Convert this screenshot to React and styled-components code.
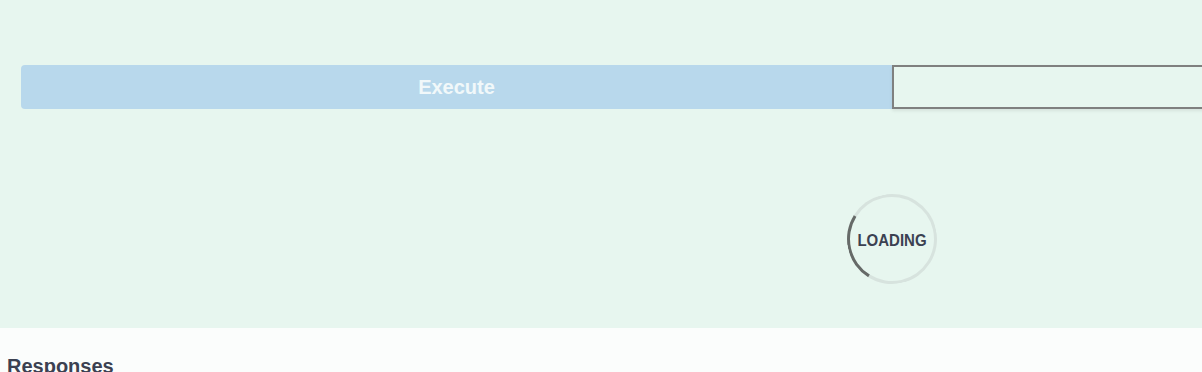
import React from "react";
import styled, { createGlobalStyle } from "styled-components";

const GlobalStyle = createGlobalStyle`
  html, body {
    margin: 0;
    padding: 0;
    overflow: hidden;
    background: #fbfdfc;
    font-family: "Liberation Sans", Arial, sans-serif;
  }
`;

export default function App() {
  return (
    <>
      <GlobalStyle />
      <Page>
        <OperationBody>
          <Inner>
            <ButtonGroup>
              <ExecuteButton>Execute</ExecuteButton>
              <ClearButton />
            </ButtonGroup>
            <LoadingContainer>
              <Spinner />
              <LoadingText>LOADING</LoadingText>
            </LoadingContainer>
          </Inner>
        </OperationBody>
        <ResponsesHeader>
          <h4>Responses</h4>
        </ResponsesHeader>
      </Page>
    </>
  );
}

const Page = styled.div`
  width: 1202px;
  height: 372px;
  overflow: hidden;
`;

const OperationBody = styled.div`
  height: 328px;
  background: #e7f6ef;
  overflow: hidden;
`;

const Inner = styled.div`
  width: 1742px;
  padding: 65px 21px 0;
  display: flex;
  flex-direction: column;
  align-items: center;
`;

const ButtonGroup = styled.div`
  display: flex;
  width: 100%;
  height: 44px;
`;

const ExecuteButton = styled.button`
  width: 50%;
  flex-shrink: 0;
  box-sizing: border-box;
  border: none;
  border-radius: 4px 0 0 4px;
  background: #b8d8ec;
  color: #f1f8fa;
  font-family: "Liberation Sans", Arial, sans-serif;
  font-size: 20px;
  font-weight: 700;
  padding: 0;
`;

const ClearButton = styled.button`
  width: 50%;
  flex-shrink: 0;
  box-sizing: border-box;
  border: 2px solid #7f807f;
  border-right: none;
  background: transparent;
  box-shadow: 0 2px 3px rgba(0, 0, 0, 0.08);
  padding: 0;
`;

const LoadingContainer = styled.div`
  position: relative;
  width: 90px;
  height: 90px;
  margin-top: 85px;
  display: flex;
  align-items: center;
  justify-content: center;
`;

const Spinner = styled.div`
  position: absolute;
  inset: 0;
  box-sizing: border-box;
  border-radius: 50%;
  border: 3px solid #d7e3de;
  border-left-color: #666a68;
  transform: rotate(-13deg);
`;

const LoadingText = styled.span`
  position: relative;
  font-size: 15px;
  font-weight: 700;
  color: #3b4151;
  transform: scaleY(1.15);
`;

const ResponsesHeader = styled.div`
  padding: 27px 7px 0;
  h4 {
    margin: 0;
    font-size: 20px;
    font-weight: 700;
    color: #3b4151;
    line-height: 23px;
  }
`;
